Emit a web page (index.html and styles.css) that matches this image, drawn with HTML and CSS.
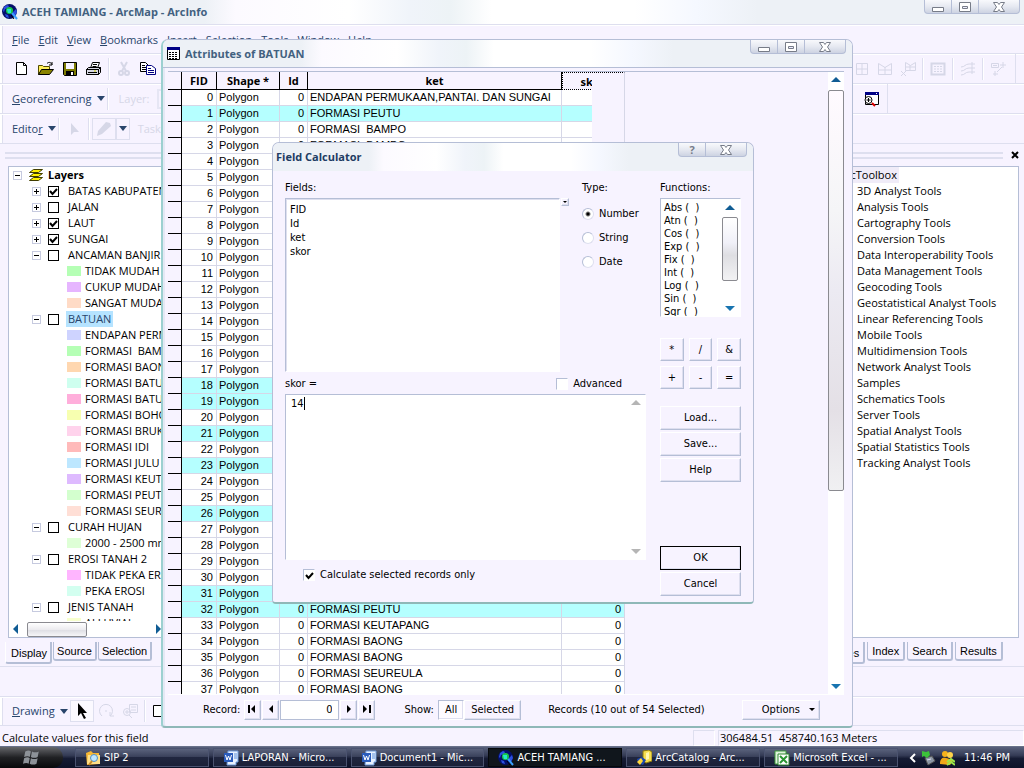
FILE: index.html
```html
<!DOCTYPE html>
<html lang="en">
<head>
    <meta charset="UTF-8">
    <meta name="viewport" content="width=device-width, initial-scale=1.0">
    <title>ACEH TAMIANG - ArcMap - ArcInfo</title>
    <link rel="stylesheet" href="styles.css">
</head>
<body>
    <!-- Shared icons -->
    <svg class="defs" aria-hidden="true">
        <symbol id="i-min" viewBox="0 0 14 12"><path d="M1.500 6.500h11v4h-11z" fill="#fff" stroke="#777c88"/></symbol>
        <symbol id="i-max" viewBox="0 0 14 12"><path d="M1.500 1.500h11v9h-11z" fill="#fff" stroke="#777c88"/><path d="M4.500 5.500h5v2h-5z" fill="#eef" stroke="#777c88"/></symbol>
        <symbol id="i-close" viewBox="0 0 14 12"><path d="M1.500 1.500h4l1.500 2 1.500-2h4L9.500 6l3 4.500h-4L7 8.500l-1.500 2h-4L4.500 6z" fill="#fff" stroke="#777c88"/></symbol>
        <symbol id="i-globe" viewBox="0 0 16 16"><circle cx="7.500" cy="7.500" r="7.500" fill="#04106b"/><path d="M2 3l3-2 2 1-1 2-3 1-1 3-1-1zM11 8l3-3 1 3-2 4-2-1zM3 10l3 1 1 3-3-1z" fill="#2b50e0"/><circle cx="7.500" cy="6.500" r="3.500" fill="#18c848"/><path d="M5 5h4v4H6z" fill="#25e6d0"/><path d="M10 9l5 6" stroke="#3aa0ff" stroke-width="2"/><path d="M9 11l3 4" stroke="#001"/></symbol>
        <symbol id="i-word" viewBox="0 0 16 16"><path d="M5 1h10v11h-2v3H4z" fill="#e8f1ff" stroke="#6f9bdc"/><path d="M11 4h3M11 6h3M11 8h3" stroke="#5a8fdc"/><path d="M1 3h9v9H1z" fill="#2a5cbc"/><path d="M2.500 5l1.500 5 1.500-4 1.500 4 1.500-5" fill="none" stroke="#fff"/></symbol>
    </svg>

    <div class="desktop">
        <main class="app">
            <header class="titlebar">
                <svg class="title-icon"><use href="#i-globe"/></svg>
                <h1>ACEH TAMIANG - ArcMap - ArcInfo</h1>
                <div class="caption">
                    <button aria-label="Minimize"><svg><use href="#i-min"/></svg></button>
                    <button aria-label="Maximize"><svg><use href="#i-max"/></svg></button>
                    <button class="wide" aria-label="Close"><svg><use href="#i-close"/></svg></button>
                </div>
            </header>

            <nav class="bar menubar">
                <a href="#"><u>F</u>ile</a>
                <a href="#"><u>E</u>dit</a>
                <a href="#"><u>V</u>iew</a>
                <a href="#"><u>B</u>ookmarks</a>
                <a href="#"><u>I</u>nsert</a>
                <a href="#"><u>S</u>election</a>
                <a href="#"><u>T</u>ools</a>
                <a href="#"><u>W</u>indow</a>
                <a href="#"><u>H</u>elp</a>
            </nav>

            <div class="bar tools-standard">
                <button class="tool" aria-label="New"><svg viewBox="0 0 16 16"><path d="M2.500 1.500h7l3 3v9h-10zM9.500 1.500v3h3" fill="#fff" stroke="#000"/></svg></button>
                <button class="tool" aria-label="Open"><svg viewBox="0 0 16 16"><path d="M.5 13.500v-9h4l1 1h6v3" fill="#ffef5a" stroke="#554c00"/><path d="M.5 13.500l3-5h12l-4 5z" fill="#8a8400" stroke="#000"/><path d="M9 2.500c2-2 4-1 5 1m0-2.500v3h-3" fill="none" stroke="#000"/></svg></button>
                <button class="tool" aria-label="Save"><svg viewBox="0 0 16 16"><path d="M1.500 1.500h13v13h-12l-1-1z" fill="#7d7b00" stroke="#000"/><path d="M4 2h8v6H4z" fill="#f7f3ff"/><path d="M4 10h8v5H4z" fill="#000"/><path d="M9 11h2v3H9z" fill="#fff"/></svg></button>
                <button class="tool" aria-label="Print"><svg viewBox="0 0 16 16"><path d="M4.500 7l2-5.500h7l-2 5.500z" fill="#fff" stroke="#000"/><path d="M7 3.500h4M6.500 5.500h4" stroke="#000"/><path d="M.5 8.500l2-2h12l-2 2zM.5 8.500h12v5H.5zM12.500 8.500l2-2v5l-2 2z" fill="#d8d8e4" stroke="#000"/><path d="M2 11.500h9" stroke="#000"/><path d="M8 10h2" stroke="#cc0"/></svg></button>
                <span class="sep"></span>
                <button class="tool" aria-label="Cut" disabled><svg viewBox="0 0 16 16"><path d="M5 1l5 9M11 1l-5 9" stroke="#d6d7e7" stroke-width="2"/><circle cx="5" cy="12" r="2" fill="none" stroke="#d6d7e7" stroke-width="2"/><circle cx="11" cy="12" r="2" fill="none" stroke="#d6d7e7" stroke-width="2"/></svg></button>
                <button class="tool" aria-label="Copy"><svg viewBox="0 0 16 16"><path d="M.5 1.500h5l3 3v6h-8z" fill="#fff" stroke="#000"/><path d="M2 4.500h3M2 6.500h4M2 8.500h4" stroke="#000"/><path d="M6.500 4.500h5l4 3v6h-9z" fill="#fff" stroke="#000080"/><path d="M8 7.500h3M8 9.500h6M8 11.500h6" stroke="#000080"/></svg></button>
                <div class="right-tools">
                    <svg viewBox="0 0 16 16"><path d="M2.500 2.500h11v11h-11zM8 2.500v11M2.500 8h11"/></svg>
                    <svg viewBox="0 0 16 16"><path d="M1.500 2.500l6.500 4 6.500-4v11h-13zM8 6v8M1.500 9h13"/></svg>
                    <svg viewBox="0 0 16 16"><path d="M5.500 1.500l5 3 5-3v8h-10zM10 4v6M5.500 6h10M1 10l5 5M6 10l-5 5"/></svg>
                    <span class="sep"></span>
                    <svg viewBox="0 0 16 16"><path d="M1.500 2.500h13v11h-13z" stroke-width="2"/><path d="M4 5.500h8M4 8h8M4 10.500h8" stroke-dasharray="2 1"/></svg>
                    <span class="sep"></span>
                    <svg viewBox="0 0 16 16"><path d="M1 6c4 0 4-3 8-3h6M1 10c4 0 4-3 8-3h6M1 14c4 0 4-3 8-3h6M12 1v4M12 5v4M12 9v4"/></svg>
                    <span class="sep"></span>
                    <svg viewBox="0 0 16 16"><path d="M1.500 2.500h7v4h-7zM3 4.500h4M13 1v6M10 4h6M3 13h5M5 10v5M7 11l5-5"/></svg>
                </div>
            </div>

            <div class="bar tools-geo">
                <button class="menu-button"><span><u>G</u>eoreferencing</span><i class="caret"></i></button>
                <span class="sep"></span>
                <label class="disabled" for="layer">Layer:</label>
                <select id="layer" class="combo" disabled></select>
                <div class="viewer">
                    <button class="tool" aria-label="Viewer"><svg viewBox="0 0 16 16"><path d="M1.500 1.500h13v12h-13z" fill="#fff" stroke="#000"/><path d="M1 1h14v3H1z" fill="#000084"/><path d="M12 2h1v1h-1z" fill="#fff"/><circle cx="4.500" cy="9" r="3.500" fill="#fff" stroke="#000"/><path d="M2.500 9h4M4.500 7v4" stroke="#000"/><path d="M8 12l3 3" stroke="#d00" stroke-width="2"/></svg></button>
                </div>
            </div>

            <div class="bar tools-editor">
                <button class="menu-button"><span>Edito<u>r</u></span><i class="caret"></i></button>
                <span class="sep"></span>
                <svg class="tool ghost" viewBox="0 0 16 16"><path d="M5 2v12l3-3h5z"/></svg>
                <span class="sep"></span>
                <button class="pencil" aria-label="Sketch tool" disabled><svg viewBox="0 0 16 16"><path d="M1 15l1-5 8-9 4 1 1 3-9 8z" fill="#d6d7e7"/></svg></button>
                <button class="pencil drop" aria-label="Choose tool"><i class="caret"></i></button>
                <span class="disabled">Task:</span>
            </div>

            <div class="workspace">
                <section class="panel toc">
                    <div class="grip"><span class="lines"></span></div>
                    <div class="well">
                        <ul class="tree" id="toc-tree"></ul>
                        <div class="hscroll">
                            <i class="arrow left"></i>
                            <span class="thumb"></span>
                            <i class="arrow right"></i>
                        </div>
                    </div>
                    <div class="tabs">
                        <button class="active">Display</button>
                        <button>Source</button>
                        <button>Selection</button>
                    </div>
                </section>

                <section class="panel toolbox">
                    <div class="grip"><span class="lines"></span><button class="x" aria-label="Close panel"><svg viewBox="0 0 8 8"><path d="M1 1l6 6M7 1L1 7" stroke="#000" stroke-width="2"/></svg></button></div>
                    <div class="well">
                        <ul class="boxes">
                            <li class="root"><span>ArcToolbox</span></li>
                            <li>3D Analyst Tools</li>
                            <li>Analysis Tools</li>
                            <li>Cartography Tools</li>
                            <li>Conversion Tools</li>
                            <li>Data Interoperability Tools</li>
                            <li>Data Management Tools</li>
                            <li>Geocoding Tools</li>
                            <li>Geostatistical Analyst Tools</li>
                            <li>Linear Referencing Tools</li>
                            <li>Mobile Tools</li>
                            <li>Multidimension Tools</li>
                            <li>Network Analyst Tools</li>
                            <li>Samples</li>
                            <li>Schematics Tools</li>
                            <li>Server Tools</li>
                            <li>Spatial Analyst Tools</li>
                            <li>Spatial Statistics Tools</li>
                            <li>Tracking Analyst Tools</li>
                        </ul>
                    </div>
                    <div class="tabs">
                        <button class="active">Favorites</button>
                        <button>Index</button>
                        <button>Search</button>
                        <button>Results</button>
                    </div>
                </section>
            </div>

            <div class="bar drawing">
                <button class="menu-button"><span><u>D</u>rawing</span><i class="caret"></i></button>
                <button class="tool pressed" aria-label="Select elements"><svg viewBox="0 0 16 16"><path d="M4 0v13l3-3 3 6 2-1-3-5h4z" fill="#000"/></svg></button>
                <svg class="tool ghost line" viewBox="0 0 16 16"><path d="M4 13a6.500 6.500 0 1 1 8 0M12 9v4h4M7 8h2"/></svg>
                <svg class="tool ghost line" viewBox="0 0 16 16"><path d="M7.500 1.500h8v8h-8zM9 4h5M9 7h5"/><circle cx="5" cy="9" r="3.500"/><path d="M3 9h4M5 7v4M7 12l3 3"/></svg>
                <span class="sep"></span>
                <button class="tool" aria-label="Rectangle"><svg viewBox="0 0 16 16"><path d="M1.500 2.500h13v11h-13z" fill="#fff" stroke="#000"/></svg></button>
            </div>

            <footer class="status">
                <span class="message">Calculate values for this field</span>
                <span class="cell"></span>
                <span class="cell coords">306484.51&nbsp; 458740.163 Meters</span>
            </footer>
        </main>

        <!-- Attribute table window -->
        <section class="window attributes">
            <header class="titlebar">
                <svg class="title-icon" viewBox="0 0 14 14"><path d="M.5.500h12v12H.5z" fill="#fff" stroke="#000"/><path d="M0 0h13v3H0z" fill="#000084"/><path d="M2 5.500h9M2 7.500h9M2 9.500h9M2 11.500h9" stroke="#000" stroke-dasharray="2 1"/></svg>
                <h2>Attributes of BATUAN</h2>
                <div class="caption">
                    <button aria-label="Minimize"><svg><use href="#i-min"/></svg></button>
                    <button aria-label="Maximize"><svg><use href="#i-max"/></svg></button>
                    <button class="wide" aria-label="Close"><svg><use href="#i-close"/></svg></button>
                </div>
            </header>
            <div class="sheet">
                <div class="sheet-view">
                    <table>
                        <colgroup><col class="c-mark"><col class="c-fid"><col class="c-shape"><col class="c-id"><col class="c-ket"><col class="c-skor"></colgroup>
                        <thead>
                            <tr><th></th><th>FID</th><th>Shape *</th><th>Id</th><th>ket</th><th class="current">skor</th></tr>
                        </thead>
                        <tbody id="rows"></tbody>
                    </table>
                    <div class="unpainted"></div>
                </div>
                <div class="vscroll">
                    <i class="arrow up"></i>
                    <span class="thumb"></span>
                    <i class="arrow down"></i>
                </div>
            </div>
            <div class="record-bar">
                <label for="record">Record:</label>
                <div class="record-nav">
                    <button aria-label="First"><svg viewBox="0 0 10 8"><path d="M0 0h2v8H0zM7 0v8L3 4z"/></svg></button>
                    <button aria-label="Previous"><svg viewBox="0 0 10 8"><path d="M7 0v8L3 4z"/></svg></button>
                    <input type="text" id="record" value="0">
                    <button aria-label="Next"><svg viewBox="0 0 10 8"><path d="M3 0v8l4-4z"/></svg></button>
                    <button aria-label="Last"><svg viewBox="0 0 10 8"><path d="M1 0v8l4-4zM7 0h2v8H7z"/></svg></button>
                </div>
                <span class="show">Show:</span>
                <div class="show-buttons">
                    <button class="on">All</button>
                    <button>Selected</button>
                </div>
                <span class="count">Records (10 out of 54 Selected)</span>
                <button class="options">Options<i class="caret"></i></button>
            </div>
        </section>

        <!-- Field calculator dialog -->
        <section class="window calculator">
            <header class="titlebar">
                <h2>Field Calculator</h2>
                <div class="caption">
                    <button aria-label="Help">?</button>
                    <button class="wide" aria-label="Close"><svg><use href="#i-close"/></svg></button>
                </div>
            </header>
            <form class="calc">
                <div class="calc-left">
                    <div class="upper">
                        <div class="fields">
                            <label for="fields">Fields:</label>
                            <select id="fields" size="4">
                                <option>FID</option>
                                <option>Id</option>
                                <option>ket</option>
                                <option>skor</option>
                            </select>
                        </div>
                        <button type="button" class="mini" aria-label="Sort"><i class="caret"></i></button>
                        <fieldset class="types">
                            <legend>Type:</legend>
                            <label><input type="radio" name="type" checked>Number</label>
                            <label><input type="radio" name="type">String</label>
                            <label><input type="radio" name="type">Date</label>
                        </fieldset>
                    </div>
                    <div class="expr-head">
                        <label for="expr">skor =</label>
                        <label class="advanced"><input type="checkbox">Advanced</label>
                    </div>
                    <div class="expr">
                        <textarea id="expr">14</textarea>
                        <span class="cursor"></span>
                        <div class="vscroll off"><i class="arrow up"></i><i class="arrow down"></i></div>
                    </div>
                    <label class="only"><input type="checkbox" checked>Calculate selected records only</label>
                </div>
                <div class="calc-right">
                    <label for="functions">Functions:</label>
                    <div class="functions">
                        <select id="functions" size="9">
                            <option>Abs (&nbsp; )</option>
                            <option>Atn (&nbsp; )</option>
                            <option>Cos (&nbsp; )</option>
                            <option>Exp (&nbsp; )</option>
                            <option>Fix (&nbsp; )</option>
                            <option>Int (&nbsp; )</option>
                            <option>Log (&nbsp; )</option>
                            <option>Sin (&nbsp; )</option>
                            <option>Sqr (&nbsp; )</option>
                        </select>
                        <div class="vscroll">
                            <i class="arrow up"></i>
                            <span class="thumb"></span>
                            <i class="arrow down"></i>
                        </div>
                    </div>
                    <div class="operators">
                        <button type="button">*</button>
                        <button type="button">/</button>
                        <button type="button">&amp;</button>
                        <button type="button">+</button>
                        <button type="button">-</button>
                        <button type="button">=</button>
                    </div>
                    <div class="actions">
                        <button type="button">Load...</button>
                        <button type="button">Save...</button>
                        <button type="button">Help</button>
                    </div>
                    <div class="actions confirm">
                        <button type="button" class="default">OK</button>
                        <button type="button">Cancel</button>
                    </div>
                </div>
            </form>
        </section>

        <footer class="taskbar">
            <button class="start" aria-label="Start"><svg viewBox="0 0 16 16"><path d="M2 3c2-1 4-1 5 0L6 8C5 7 3 7 1 8zM8 3c2 1 4 1 6 0l-1 5c-2 1-4 1-6 0zM1 9c2-1 4-1 5 0l-1 5c-1-1-3-1-5 0zM7 9c2 1 4 1 6 0l-1 5c-2 1-4 1-6 0z" fill="#8d9298"/></svg></button>
            <div class="tasks">
                <button><svg viewBox="0 0 16 16"><path d="M1 3l5-2 2 2h6v11l-12 1z" fill="#f7b733"/><path d="M3 5h12v9H2z" fill="#ffe08a"/><circle cx="9" cy="8" r="3.500" fill="#bfe6ff" stroke="#4e8fc4"/><path d="M7 11l-3 4" stroke="#c88b2a" stroke-width="2"/></svg><span>SIP 2</span></button>
                <button><svg><use href="#i-word"/></svg><span>LAPORAN - Micro...</span></button>
                <button><svg><use href="#i-word"/></svg><span>Document1 - Mic...</span></button>
                <button class="active"><svg><use href="#i-globe"/></svg><span>ACEH TAMIANG ...</span></button>
                <button><svg viewBox="0 0 16 16"><path d="M7 1l6-1 3 2v9l-6 2-3-2z" fill="#f5dd4e" stroke="#8c7a10"/><path d="M10 3l3-1v7l-3 1z" fill="#fff6b0"/><path d="M1 9l5-2 4 3-3 5-5-2z" fill="#1c48b0"/><path d="M1 12l4-4 2 3-3 4z" fill="#ffd83a"/></svg><span>ArcCatalog - Arc...</span></button>
                <button><svg viewBox="0 0 16 16"><path d="M1 1h11v13H1z" fill="#dff3dc" stroke="#3d9a3a"/><path d="M4 4h11v11H4z" fill="#fff" stroke="#2f8a30"/><path d="M6 6l7 7M13 6l-7 7" stroke="#2b9632" stroke-width="2"/></svg><span>Microsoft Excel - ...</span></button>
            </div>
            <div class="tray">
                <svg class="chevron" viewBox="0 0 8 10"><path d="M6 1L2 5l4 4" fill="none" stroke="#fff" stroke-width="2"/></svg>
                <svg viewBox="0 0 14 16"><path d="M4 8l7-2 3 5-7 4z" fill="#8c96a4" stroke="#555"/><path d="M6 10l4-1" stroke="#dde"/><path d="M1 1l4 1 3-1 1 4-3 3-3-2-2 1z" fill="#3cc23a"/></svg>
                <svg viewBox="0 0 16 16"><circle cx="6" cy="4" r="3" fill="#f6b21c"/><circle cx="11" cy="5" r="3" fill="#ffd24a"/><path d="M1 14c0-6 3-7 6-6s5 1 7 3l-3 4z" fill="#f0a818"/><path d="M8 12l4-3 4 3M8 15l4-3 4 3" fill="none" stroke="#9be84a" stroke-width="2"/></svg>
                <time>11:46 PM</time>
            </div>
        </footer>
    </div>

    <script src="script.js"></script>
</body>
</html>
```

FILE: styles.css
```css
:root {
    --face: #f7f3ff;
    --line: #dedfef;
    --ghost: #d6d7e7;
    --shadow: #b5bed6;
    --navy: #29456b;
    --main: "Open Sans", "Noto Sans", sans-serif;
    --dialog: "DejaVu Sans Condensed", "DejaVu Sans", sans-serif;
    --grid: "Liberation Sans", Arial, sans-serif;
}

* {
    box-sizing: border-box;
}

body {
    margin: 0;
    font-family: var(--main);
    font-size: 11px;
    line-height: 16px;
    color: #000;
}

button, input, select, textarea {
    font: inherit;
    color: inherit;
    margin: 0;
    padding: 0;
    border: 0;
    border-radius: 0;
    background: none;
    outline: none;
}

ul {
    list-style: none;
    margin: 0;
    padding: 0;
}

.defs {
    position: absolute;
    width: 0;
    height: 0;
}

.desktop {
    position: relative;
    display: flex;
    flex-direction: column;
    height: 100vh;
    overflow: hidden;
    background: var(--face);
}

.app {
    flex: 1;
    min-height: 0;
    display: flex;
    flex-direction: column;
}

/* Title bars */
.titlebar {
    flex: none;
    display: flex;
    align-items: center;
    gap: 4px;
    height: 25px;
    padding-left: 2px;
    border-bottom: 1px solid var(--line);
    background: linear-gradient(90deg, #edf1f6 0, #edf1f6 20%, #fcfaff 23%, #fff 34%, #f0f4fa 40%, #edf3f6 44%, #fff 48%, #fff 62%, #f5f8ff 68%, #edf1f6 74%, #edf1f6 100%);
}

.titlebar h1, .titlebar h2 {
    flex: 1;
    margin: 0;
    font-size: 11px;
    font-weight: bold;
    line-height: 16px;
    color: #426180;
}

.title-icon {
    width: 16px;
    height: 16px;
}

.caption {
    align-self: flex-start;
    display: flex;
    height: 14px;
    margin-right: 4px;
    border: 1px solid var(--shadow);
    border-top: 0;
    border-radius: 0 0 4px 4px;
    background: linear-gradient(#f8f9fc, #e6e9f1 50%, #cdd3e2);
}

.caption button {
    display: flex;
    align-items: center;
    justify-content: center;
    width: 27px;
    border-right: 1px solid var(--shadow);
    color: #777c88;
    font-weight: bold;
}

.caption .wide {
    width: 40px;
    border-right: 0;
}

.caption svg {
    width: 14px;
    height: 12px;
}

/* Toolbars */
.bar {
    flex: none;
    display: flex;
    align-items: center;
    height: 30px;
    border-bottom: 1px solid var(--line);
    box-shadow: inset 0 1px #fff, inset 2px 0 #fff, inset 3px 0 var(--line);
    color: var(--navy);
}

.menubar {
    gap: 9px;
    height: 29px;
    padding: 2px 0 0 12px;
}

.menubar a {
    color: inherit;
    text-decoration: none;
}

.tool {
    width: 24px;
    height: 22px;
    display: flex;
    align-items: center;
    justify-content: center;
}

.tool svg {
    width: 16px;
    height: 16px;
}

.tools-standard {
    padding-left: 10px;
}

.sep {
    flex: none;
    width: 2px;
    height: 22px;
    margin: 0 2px;
    border-left: 1px solid var(--line);
    border-right: 1px solid #fff;
}

.right-tools {
    display: flex;
    align-items: center;
    gap: 5px;
    margin-left: auto;
    margin-right: 8px;
    padding-right: 8px;
    border-right: 1px solid var(--line);
    height: 100%;
}

.right-tools svg {
    width: 18px;
    height: 16px;
    fill: none;
    stroke: var(--ghost);
}

.right-tools .sep {
    margin: 0;
}

.caret {
    display: inline-block;
    border: 4px solid transparent;
    border-top: 5px solid currentColor;
    border-bottom: 0;
}

.menu-button {
    display: flex;
    align-items: center;
    gap: 5px;
    padding-left: 12px;
}

.disabled {
    color: var(--ghost);
    margin: 0 8px;
}

.combo {
    width: 120px;
    height: 20px;
    border: 2px solid var(--line);
    appearance: none;
}

.viewer {
    display: flex;
    align-items: center;
    height: 100%;
    margin-left: auto;
    margin-right: 136px;
    padding-right: 3px;
    border-right: 1px solid var(--line);
}

.ghost {
    padding: 0 4px;
    fill: var(--ghost);
}

.ghost.line {
    fill: none;
    stroke: var(--ghost);
}

.pencil {
    display: flex;
    align-items: center;
    justify-content: center;
    width: 24px;
    height: 22px;
    border: 1px solid var(--line);
}

.pencil svg {
    width: 16px;
    height: 16px;
}

.pencil.drop {
    width: 14px;
}

.drawing {
    border-top: 1px solid var(--line);
}

.pressed {
    margin-left: 2px;
    border: 1px solid var(--line);
    background: #fbf9ff;
}

/* Dock panels */
.workspace {
    flex: 1;
    min-height: 0;
    display: flex;
    justify-content: space-between;
    margin-bottom: 29px;
    border-bottom: 1px solid var(--line);
}

.panel {
    display: flex;
    flex-direction: column;
    width: 200px;
    padding: 0 5px;
}

.toolbox {
    width: 220px;
}

.grip {
    display: flex;
    align-items: center;
    gap: 4px;
    height: 22px;
    flex: none;
}

.lines {
    flex: 1;
    height: 7px;
    border: solid var(--line);
    border-width: 2px 0;
}

.x {
    display: flex;
    align-items: center;
    justify-content: flex-end;
    width: 12px;
    height: 12px;
}

.x svg {
    width: 8px;
    height: 8px;
}

.well {
    flex: 1;
    min-height: 0;
    display: flex;
    flex-direction: column;
    margin-left: 3px;
    overflow: hidden;
    border: 1px solid var(--shadow);
    background: #fff;
}

.tree {
    flex: 1;
    min-height: 0;
    overflow: hidden;
}

.tree li, .boxes li {
    display: flex;
    align-items: center;
    height: 16px;
    white-space: pre;
}

.boxes {
    padding-left: 24px;
}

.boxes li {
    padding-left: 20px;
}

.boxes .root {
    padding-left: 0;
}

.boxes .root span {
    padding: 0 2px;
    background: #f0ecf8;
}

.tree .layer {
    padding-left: 23px;
}

.tree .root {
    padding-left: 4px;
    font-weight: bold;
}

.tree .layers-icon {
    width: 16px;
    height: 14px;
    margin: 0 4px 0 6px;
}

.tree .class {
    padding-left: 58px;
}

.expand {
    display: flex;
    flex: none;
    width: 9px;
    height: 9px;
    align-items: center;
    justify-content: center;
    border: 1px solid #c6cadf;
}

.expand svg {
    width: 7px;
    height: 7px;
}

.tree input {
    flex: none;
    width: 11px;
    height: 11px;
    margin: 0 7px;
    appearance: none;
    border: 1px solid #000;
    background: #fff;
}

.tree label {
    padding: 0 2px;
}

.tree .picked {
    background: #b5e3ff;
    color: var(--navy);
}

.swatch {
    flex: none;
    width: 14px;
    height: 10px;
    margin-right: 4px;
}

input[type="checkbox"]:checked {
    background: #fff url("data:image/svg+xml,%3Csvg xmlns='http://www.w3.org/2000/svg' viewBox='0 0 9 9'%3E%3Cpath d='M1 4l2.500 3L8 2' fill='none' stroke='%23000' stroke-width='2'/%3E%3C/svg%3E") center / 9px 9px no-repeat;
}

.hscroll {
    flex: none;
    display: flex;
    align-items: center;
    height: 16px;
    padding: 0 33px 0 4px;
}

.hscroll .thumb {
    width: 60px;
    height: 15px;
    margin-left: 9px;
    background: linear-gradient(#fff, #ecebef 50%, #dfdfe4 55%, #f6f6f8);
}

.hscroll .right {
    margin-left: auto;
}

.thumb {
    border: 1px solid #8a8a90;
    border-radius: 2px;
}

.arrow {
    border: 5px solid transparent;
}

.arrow.left {
    border-right-color: #105c94;
    border-left: 0;
}

.arrow.right {
    border-left-color: #105c94;
    border-right: 0;
}

.arrow.up {
    border-bottom-color: #105c94;
    border-top: 0;
}

.arrow.down {
    border-top-color: #1874b0;
    border-bottom: 0;
}

.tabs {
    flex: none;
    display: flex;
    align-items: flex-start;
    gap: 2px;
    height: 28px;
    padding-top: 4px;
    font-family: var(--grid);
}

.tabs button {
    height: 19px;
    padding: 0 4px;
    border: solid var(--shadow);
    border-width: 0 2px 2px 1px;
    border-radius: 0 0 3px 3px;
}

.tabs .active {
    height: 22px;
    padding: 2px 4px 0;
    border-left-color: #fff;
}

.toc .tabs {
    gap: 1px;
    margin-right: -5px;
}

.toc .tabs button {
    padding-left: 3px;
    padding-right: 3px;
}

.toc .tabs .active {
    padding-left: 5px;
}

.status {
    flex: none;
    display: flex;
    align-items: center;
    gap: 3px;
    height: 20px;
    padding: 3px 0 0 2px;
}

.message {
    flex: 1;
}

.cell {
    width: 22px;
    height: 16px;
    border: 1px solid var(--line);
    border-right-color: #fff;
    border-bottom-color: #fff;
}

.coords {
    width: 306px;
    line-height: 14px;
    padding-left: 1px;
}

/* Floating windows */
.window {
    position: absolute;
    display: flex;
    flex-direction: column;
    overflow: hidden;
    border: 1px solid var(--shadow);
    border-bottom: 2px solid #8fb8b8;
    border-radius: 7px 7px 4px 4px;
    background: var(--face);
    font-family: var(--dialog);
}

.window .titlebar {
    font-family: var(--main);
}

.window .caption {
    margin-right: 6px;
}

.attributes {
    left: 161px;
    top: 39px;
    width: 692px;
    height: 689px;
    border-left: 2px solid #9cd0d0;
    box-shadow: inset 2px 0 #e4e8f4;
}

.attributes .titlebar {
    height: 28px;
    padding-left: 4px;
    border-bottom-color: var(--shadow);
}

.attributes .title-icon {
    width: 14px;
    height: 14px;
}

.sheet {
    flex: 1;
    min-height: 0;
    display: flex;
    margin: 3px 8px 0 5px;
    border-top: 1px solid var(--shadow);
    border-bottom: 1px solid #fff;
}

.sheet-view {
    position: relative;
    flex: 1;
    overflow: hidden;
}

table {
    width: 457px;
    table-layout: fixed;
    border-collapse: separate;
    border-spacing: 0;
    background: #fff;
    font-family: var(--grid);
}

.c-mark { width: 14px; }
.c-fid { width: 35px; }
.c-shape { width: 63px; }
.c-id { width: 28px; }
.c-ket { width: 254px; }
.c-skor { width: 63px; }

th, td {
    height: 16px;
    padding: 0 2px;
    overflow: hidden;
    border: solid #d6d7e7;
    border-width: 0 1px 1px 0;
    line-height: 15px;
    text-align: left;
    white-space: pre;
}

th {
    height: 18px;
    border-color: #000;
    background: var(--face);
    text-align: center;
    font-family: var(--main);
}

th.current {
    border: 1px dotted #000;
    border-right-color: var(--line);
    padding-right: 4px;
}

td:first-child {
    border-color: #000;
    background: var(--face);
}

td.number {
    text-align: right;
    padding-right: 3px;
}

tr.selected td:not(:first-child) {
    background: #b5ffff;
}

/* strip the grid has not redrawn yet */
.unpainted {
    position: absolute;
    left: 424px;
    top: 1px;
    width: 33px;
    height: 72px;
    border-right: 1px solid #d6d7e7;
    background: var(--face);
}

.vscroll {
    display: flex;
    flex-direction: column;
    align-items: center;
    width: 16px;
    padding: 5px 0;
    background: #fff;
}

.sheet .thumb {
    width: 16px;
    height: 401px;
    margin: 8px 0 auto;
    background: linear-gradient(#fffaff, #f5f5f7 30%, #eceaf2 50%, #e4e0e6 80%, #f0f0f2);
}

.record-bar {
    flex: none;
    display: flex;
    align-items: center;
    height: 31px;
    padding: 0 32px 2px 40px;
}

.record-nav {
    display: flex;
    gap: 1px;
    margin-left: 4px;
}

.record-nav input {
    width: 59px;
    height: 20px;
    padding: 0 6px;
    border: 1px solid var(--shadow);
    background: #fff;
    text-align: right;
}

.record-bar button, .calc button {
    height: 20px;
    border: 1px solid #fff;
    border-right-color: var(--shadow);
    border-bottom-color: var(--shadow);
    box-shadow: inset -1px -1px var(--line);
    background: var(--face);
}

.record-nav button {
    width: 17px;
}

.record-nav svg {
    width: 10px;
    height: 8px;
}

.show {
    margin-left: 29px;
}

.show-buttons {
    display: flex;
    margin-left: 4px;
}

.show-buttons button {
    padding: 0 6px;
}

.record-bar .on {
    border-color: var(--shadow) #fff #fff var(--shadow);
    background: #fdfbff;
}

.count {
    margin-left: 27px;
}

.options {
    display: flex;
    align-items: center;
    justify-content: flex-end;
    gap: 9px;
    width: 78px;
    margin-left: auto;
    padding: 0 4px;
}

.options .caret {
    border-width: 3px 3px 0;
}

/* Field calculator */
.calculator {
    left: 272px;
    top: 142px;
    width: 482px;
    height: 462px;
}

.calculator .titlebar {
    height: 28px;
    padding-left: 3px;
    border-bottom: 0;
}

.calculator .titlebar h2 {
    color: #213c63;
}

.calc {
    flex: 1;
    display: flex;
    justify-content: space-between;
    padding: 9px 12px 6px;
}

.calc-left {
    width: 361px;
}

.upper {
    display: flex;
    align-items: flex-start;
}

.fields {
    display: flex;
    flex-direction: column;
    width: 275px;
}

.fields select {
    height: 174px;
    margin-top: 2px;
    padding: 4px 0;
    overflow: hidden;
    border: 1px solid var(--shadow);
    border-right-color: #fff;
    border-bottom-color: #fff;
    box-shadow: inset 1px 1px var(--line);
    background: #fff;
}

.fields option {
    height: 14px;
    min-height: 14px;
    padding: 0 4px;
    line-height: 14px;
}

.calc .mini {
    display: flex;
    align-items: center;
    justify-content: center;
    width: 8px;
    height: 8px;
    margin: 18px 0 0 1px;
}

.mini .caret {
    border-width: 2px 2px 0;
}

.types {
    display: flex;
    flex-direction: column;
    gap: 8px;
    margin: 0 0 0 13px;
    padding: 0;
    border: 0;
}

.types legend {
    padding: 0;
    margin-bottom: 10px;
}

.types label, .advanced, .only {
    display: flex;
    align-items: center;
    gap: 5px;
}

.types input, .advanced input, .only input {
    width: 12px;
    height: 12px;
    appearance: none;
    border: 1px solid var(--shadow);
    border-right-color: #fff;
    border-bottom-color: #fff;
    background-color: #fff;
}

.types input {
    border-color: var(--shadow) var(--line) var(--line) var(--shadow);
    border-radius: 50%;
}

.types input:checked {
    background: radial-gradient(circle, #000 1px, #fff 3px);
}

.expr-head {
    display: flex;
    justify-content: space-between;
    align-items: center;
    margin-top: 4px;
}

.advanced {
    margin-right: 24px;
}

.expr {
    position: relative;
    display: flex;
    height: 166px;
    margin-top: 2px;
    border: 1px solid var(--shadow);
    border-right-color: #fff;
    border-bottom-color: #fff;
    background: #fff;
}

.expr textarea {
    flex: 1;
    padding: 1px 5px;
    resize: none;
}

.cursor {
    position: absolute;
    left: 18px;
    top: 2px;
    width: 1px;
    height: 13px;
    background: #000;
}

.expr .vscroll {
    width: 18px;
    justify-content: space-between;
}

.off .up { border-bottom-color: #b5b5b5; }
.off .down { border-top-color: #b5b5b5; }

.only {
    margin: 7px 0 0 18px;
}

.calc-right {
    display: flex;
    flex-direction: column;
    width: 81px;
}

.functions {
    display: flex;
    height: 119px;
    margin-top: 2px;
    overflow: hidden;
    border: 1px solid var(--shadow);
    border-right-color: #fff;
    border-bottom-color: #fff;
    background: #fff;
}

.functions select {
    flex: 1;
    height: 122px;
    overflow: hidden;
    padding-top: 2px;
}

.functions option {
    min-height: 0;
    padding: 0 3px;
    line-height: 13px;
}

.functions .vscroll {
    width: 18px;
    padding: 6px 2px 5px 0;
}

.functions .thumb {
    width: 16px;
    height: 64px;
    margin: 7px 0 auto;
    background: linear-gradient(#fff, #f0f0f8 40%, #dedee2 60%, #f2f2f4);
}

.operators {
    display: grid;
    grid-template-columns: repeat(3, 1fr);
    gap: 5px;
    margin-top: 21px;
}

.calc .operators button {
    height: 23px;
}

.actions {
    display: flex;
    flex-direction: column;
    gap: 2px;
    margin-top: 17px;
}

.calc .actions button {
    height: 24px;
}

.confirm {
    margin-top: auto;
}

.calc .default {
    border-color: #000;
}

/* Taskbar */
.taskbar {
    flex: none;
    display: flex;
    height: 22px;
    border-top: 1px solid #69718a;
    background: linear-gradient(#59617c, #343b55 40%, #151b33 55%, #0d1228);
    color: #fff;
    font-family: var(--dialog);
}

.start {
    width: 63px;
    margin-right: 12px;
    border-radius: 0 10px 10px 0;
    background: linear-gradient(#65666a, #202124 50%, #08090b);
}

.start svg {
    width: 18px;
    height: 18px;
    margin-top: 1px;
}

.tasks {
    flex: 1;
    display: flex;
    gap: 4px;
    padding: 1px 0;
}

.tasks button {
    flex: 1;
    min-width: 0;
    display: flex;
    align-items: center;
    gap: 3px;
    padding-left: 9px;
    border: 1px solid #4b5370;
    background: linear-gradient(#5a627c, #3a415b 45%, #20263f 50%, #1b2138);
    white-space: nowrap;
}

.tasks .active {
    background: #10161c;
    border-color: #05080c;
}

.tasks svg, .tray svg {
    flex: none;
    width: 16px;
    height: 16px;
}

.tray {
    display: flex;
    align-items: center;
    width: 126px;
    padding-left: 11px;
    gap: 3px;
}

.tray .chevron {
    width: 8px;
    height: 10px;
}

.tray time {
    margin-left: 6px;
    white-space: nowrap;
}
```

FILE: script.js
```js
// [type, name, checked / swatch colour, open]
const toc = [
    ["layer", "BATAS KABUPATEN", true, false],
    ["layer", "JALAN", false, false],
    ["layer", "LAUT", true, false],
    ["layer", "SUNGAI", true, false],
    ["layer", "ANCAMAN BANJIR", false, true],
    ["class", "TIDAK MUDAH", "#b5ffb5"],
    ["class", "CUKUP MUDAH", "#e6b5ff"],
    ["class", "SANGAT MUDAH", "#ffdbc6"],
    ["layer", "BATUAN", false, true],
    ["class", "ENDAPAN PERMUKAAN", "#ced3ff"],
    ["class", "FORMASI  BAMPO", "#b5ffb5"],
    ["class", "FORMASI BAONG", "#ffd7b0"],
    ["class", "FORMASI BATU", "#ceffef"],
    ["class", "FORMASI BATU", "#ffaedb"],
    ["class", "FORMASI BOHOROK", "#f7ffb0"],
    ["class", "FORMASI BRUKSAH", "#ffd3ec"],
    ["class", "FORMASI IDI", "#ffbaba"],
    ["class", "FORMASI JULU", "#bde7ff"],
    ["class", "FORMASI KEUTAPANG", "#debaff"],
    ["class", "FORMASI PEUTU", "#d3ffce"],
    ["class", "FORMASI SEUREULA", "#ffdfd6"],
    ["layer", "CURAH HUJAN", false, true],
    ["class", "2000 - 2500 mm", "#deffd6"],
    ["layer", "EROSI TANAH 2", false, true],
    ["class", "TIDAK PEKA EROSI", "#ffb5ff"],
    ["class", "PEKA EROSI", "#d3fff0"],
    ["layer", "JENIS TANAH", false, true],
    ["class", "ALLUVIAL", "#f7ffce"]
];

function expander(open) {
    const path = open ? "M1 3.500h5" : "M1 3.500h5M3.500 1v5";
    return `<span class="expand"><svg viewBox="0 0 7 7"><path d="${path}" stroke="#000"/></svg></span>`;
}

let tree = `<li class="root">${expander(true)}<svg class="layers-icon" viewBox="0 0 16 14"><path d="M1.500 12.500l4-3h9l-4 3zM1.500 8.500l4-3h9l-4 3zM1.500 4.500l4-3h9l-4 3z" fill="#ffef00" stroke="#403c00"/></svg>Layers</li>`;
toc.forEach(([type, name, value, open], i) => {
    if (type === "layer") {
        const picked = name === "BATUAN" ? ' class="picked"' : "";
        tree += `<li class="layer">${expander(open)}<input type="checkbox" id="layer-${i}"${value ? " checked" : ""}><label for="layer-${i}"${picked}>${name}</label></li>`;
    } else {
        tree += `<li class="class"><span class="swatch" style="background:${value}"></span>${name}</li>`;
    }
});
document.getElementById("toc-tree").innerHTML = tree;

const ket = {
    0: "ENDAPAN PERMUKAAN,PANTAI. DAN SUNGAI",
    1: "FORMASI PEUTU",
    2: "FORMASI  BAMPO",
    3: "FORMASI  BAMPO",
    32: "FORMASI PEUTU",
    33: "FORMASI KEUTAPANG",
    34: "FORMASI BAONG",
    35: "FORMASI BAONG",
    36: "FORMASI SEUREULA",
    37: "FORMASI BAONG"
};
const selected = [1, 18, 19, 21, 23, 26, 31, 32];

let rows = "";
for (let fid = 0; fid < 38; fid++) {
    rows += `<tr${selected.includes(fid) ? ' class="selected"' : ""}><td></td><td class="number">${fid}</td><td>Polygon</td><td class="number">0</td><td>${ket[fid] || ""}</td><td class="number">0</td></tr>`;
}
document.getElementById("rows").innerHTML = rows;
```
